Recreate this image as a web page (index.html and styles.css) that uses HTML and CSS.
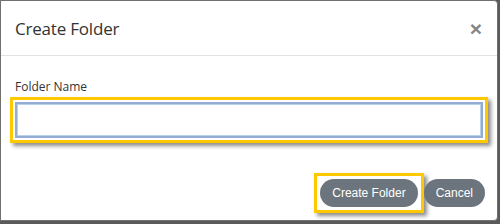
FILE: index.html
```html
<!DOCTYPE html>
<html lang="en">
<head>
<meta charset="UTF-8">
<title>Create Folder</title>
<link rel="stylesheet" href="styles.css">
</head>
<body>
<div class="modal">
    <div class="modal-header">
        <h4 class="modal-title">Create Folder</h4>
        <button class="close" type="button">&times;</button>
    </div>
    <div class="modal-body">
        <label class="field-label" for="folder-name">Folder Name</label>
        <div class="highlight field-highlight">
            <input id="folder-name" class="field-input" type="text">
        </div>
    </div>
    <div class="modal-footer">
        <div class="highlight btn-highlight">
            <button class="btn" type="button">Create Folder</button>
        </div>
        <button class="btn" type="button">Cancel</button>
    </div>
</div>
</body>
</html>
```

FILE: styles.css
```css
* {
    margin: 0;
    padding: 0;
    box-sizing: border-box;
}

body {
    background: #5a5a5a;
    font-family: "Open Sans", "Noto Sans", sans-serif;
    color: #333;
}

/* Dialog */
.modal {
    width: 498px;
    height: 221px;
    background: #fff;
    border: 1px solid #707070;
    border-radius: 0 4px 4px 0;
    display: flex;
    flex-direction: column;
}

.modal-header {
    height: 55px;
    padding: 0 14px;
    display: flex;
    align-items: center;
    justify-content: space-between;
    border-bottom: 1px solid #e2e2e2;
}

.modal-title {
    font-size: 17px;
    font-weight: normal;
    letter-spacing: -0.2px;
    color: #333;
}

.close {
    border: none;
    background: none;
    font-family: "Liberation Sans", Arial, sans-serif;
    font-size: 21px;
    font-weight: bold;
    color: #858585;
    line-height: 1;
    margin-right: 1px;
}

.modal-body {
    height: 110px;
    padding: 22px 9px 0 9px;
}

.field-label {
    display: block;
    font-size: 12px;
    margin-left: 5px;
    margin-bottom: 2px;
}

/* Yellow tutorial highlight */
.highlight {
    border: 3px solid #ffc800;
    box-shadow: 3px 3px 4px rgba(0, 0, 0, 0.45);
}

.field-highlight {
    width: 478px;
    padding: 2px;
}

.field-input {
    display: block;
    width: 100%;
    height: 36px;
    border: 2px solid #93acd0;
    box-shadow: inset 0 0 0 1px #b9d2f2;
    outline: none;
}

.modal-footer {
    flex: 1;
    display: flex;
    align-items: center;
    justify-content: flex-end;
    gap: 0;
    padding: 0 12px 0 0;
}

.btn-highlight {
    padding: 3px;
}

.btn {
    border: none;
    background: #6c757d;
    color: #fff;
    font-family: "Liberation Sans", Arial, sans-serif;
    font-size: 12px;
    height: 28px;
    padding: 0 12px;
    border-radius: 14px;
}
```
